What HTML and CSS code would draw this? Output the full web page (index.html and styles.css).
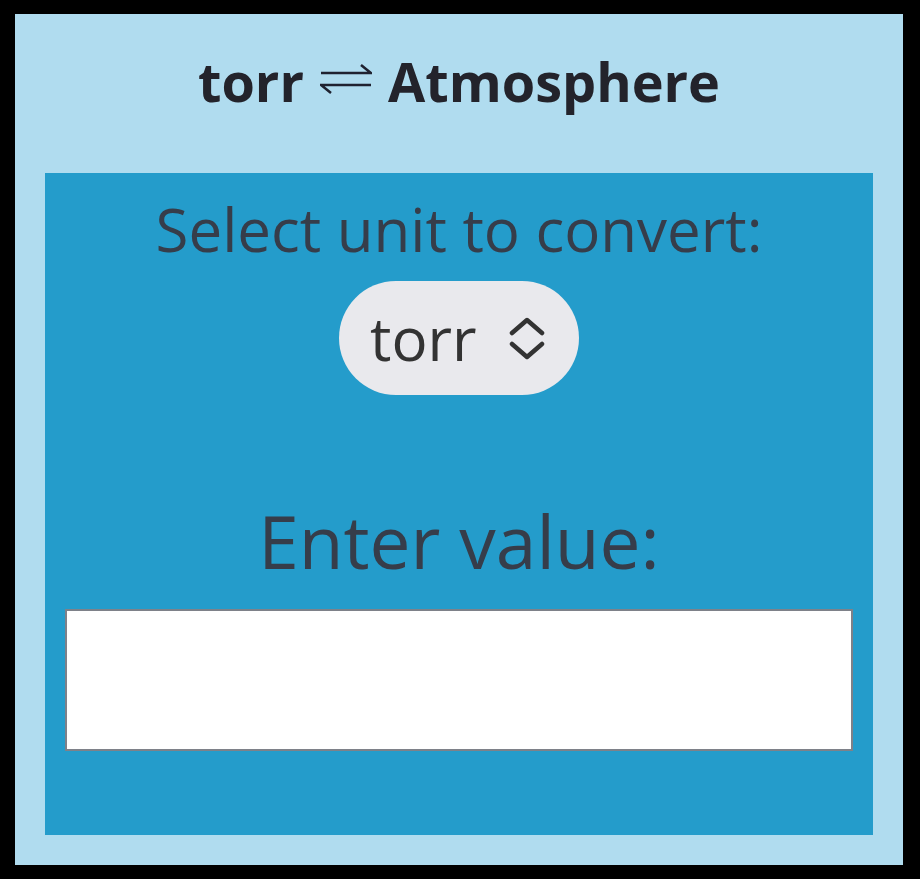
FILE: index.html
```html
<!DOCTYPE html>
<html>
<head>
<meta charset="utf-8"/>
<meta name="viewport" content="width=device-width,initial-scale=1" />
<title>torr to Atmosphere</title>
<link rel="stylesheet" href="styles.css">
</head>
<body>
    <div id="converter">
        <h1 class="title">torr <svg class="arrow" width="52" height="32" viewBox="0 0 52 32">
                <path d="M1 10 H51 L41 2" />
                <path d="M51 22 H1 L11 30" />
            </svg> Atmosphere</h1>
        <div class="panel">
            <label class="label label-unit" for="unit">Select unit to convert:</label>
            <div class="select-wrap">
                <select id="unit" class="unit-select">
                    <option>torr</option>
                    <option>Atmosphere</option>
                </select>
                <svg class="chevrons" width="36" height="44" viewBox="0 0 36 44">
                    <path d="M3 17 L18 4 L33 17" />
                    <path d="M3 28 L18 41 L33 28" />
                </svg>
            </div>
            <label class="label label-value" for="value">Enter value:</label>
            <input id="value" class="value-input" type="text">
        </div>
    </div>
</body>
</html>
```

FILE: styles.css
```css
html, body {
    margin: 0;
    padding: 0;
    background: #000;
}
body {
    padding: 14px 17px 14px 15px;
    font-family: "Open Sans", "Noto Sans", sans-serif;
}
#converter {
    background: #b0dcef;
    height: 851px;
    box-sizing: border-box;
    padding: 0 30px 30px 30px;
    display: flex;
    flex-direction: column;
}
.title {
    margin: 0;
    height: 159px;
    line-height: 134px;
    text-align: center;
    font-size: 54px;
    font-weight: bold;
    color: #23232b;
}
.title .arrow {
    vertical-align: 7px;
    margin: 0 2px;
}
.title .arrow path {
    fill: none;
    stroke: #1f2230;
    stroke-width: 2.6;
}
.panel {
    flex: 1;
    background: #249ccb;
    display: flex;
    flex-direction: column;
    align-items: center;
    padding: 18px 20px 0 20px;
}
.label {
    display: block;
    color: #363d4a;
    text-align: center;
}
.label-unit {
    font-size: 60px;
    line-height: 76px;
}
.select-wrap {
    position: relative;
    margin-top: 14px;
}
.unit-select {
    appearance: none;
    -webkit-appearance: none;
    width: 240px;
    height: 114px;
    border: none;
    border-radius: 57px;
    background: #e9e9ed;
    color: #333;
    font-family: "Open Sans", "Noto Sans", sans-serif;
    font-size: 60px;
    padding: 0 0 0 31px;
    outline: none;
}
.chevrons {
    position: absolute;
    right: 34px;
    top: 35px;
    pointer-events: none;
}
.chevrons path {
    fill: none;
    stroke: #333;
    stroke-width: 4.5;
    stroke-linecap: round;
    stroke-linejoin: round;
}
.label-value {
    font-size: 73px;
    line-height: 96px;
    margin-top: 98px;
}
.value-input {
    margin-top: 20px;
    width: 100%;
    height: 142px;
    box-sizing: border-box;
    border: 2px solid #7e8189;
    background: #fff;
    font-size: 40px;
    outline: none;
}
```
